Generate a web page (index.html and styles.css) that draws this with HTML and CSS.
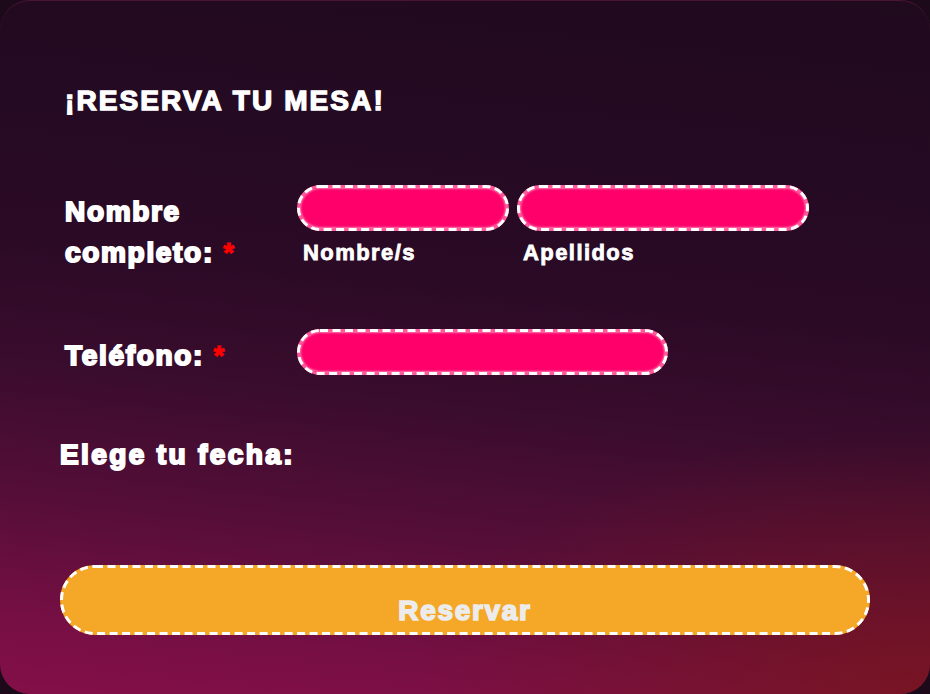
FILE: index.html
```html
<!DOCTYPE html>
<html lang="es">
<head>
<meta charset="utf-8">
<title>Reserva tu mesa</title>
<link rel="stylesheet" href="styles.css">
</head>
<body>
<form class="card">
  <h1 class="title">¡RESERVA TU MESA!</h1>

  <div class="row row-name">
    <label class="label">Nombre completo:<span class="req"> *</span></label>
    <div class="fields">
      <div class="field">
        <div class="pill pill-first">
          <input class="input" type="text">
          <svg class="dash" width="212" height="46" viewBox="0 0 212 46"><rect x="1.5" y="1.5" width="209" height="43" rx="21.5" ry="21.5"/></svg>
        </div>
        <span class="sub">Nombre/s</span>
      </div>
      <div class="field">
        <div class="pill pill-last">
          <input class="input" type="text">
          <svg class="dash" width="292" height="46" viewBox="0 0 292 46"><rect x="1.5" y="1.5" width="289" height="43" rx="21.5" ry="21.5"/></svg>
        </div>
        <span class="sub">Apellidos</span>
      </div>
    </div>
  </div>

  <div class="row row-phone">
    <label class="label">Teléfono:<span class="req"> *</span></label>
    <div class="fields">
      <div class="pill pill-phone">
        <input class="input" type="tel">
        <svg class="dash" width="371" height="46" viewBox="0 0 371 46"><rect x="1.5" y="1.5" width="368" height="43" rx="21.5" ry="21.5"/></svg>
      </div>
    </div>
  </div>

  <p class="date-label">Elege tu fecha:</p>

  <div class="pill pill-submit">
    <button class="submit" type="button">Reservar</button>
    <svg class="dash" width="810" height="70" viewBox="0 0 810 70"><rect x="1.5" y="1.5" width="807" height="67" rx="33.5" ry="33.5"/></svg>
  </div>
</form>
</body>
</html>
```

FILE: styles.css
```css
html, body {
  margin: 0;
  padding: 0;
  background: #1c0a1b;
}

body {
  font-family: "Liberation Sans", Arial, sans-serif;
  color: #ffffff;
}

.card {
  box-sizing: border-box;
  width: 930px;
  height: 694px;
  padding: 85px 60px 0 60px;
  border-radius: 30px;
  border-top: 1px solid #4a1434;
  background:
    radial-gradient(ellipse 65% 45% at 100% 100%, rgba(122, 22, 24, 0.75), rgba(122, 22, 24, 0) 85%),
    linear-gradient(6deg, #840f48 0%, #760f44 10%, #560e38 25%, #3a0c2d 42%, #2b0a26 58%, #240a22 78%, #200a1e 100%);
  display: flex;
  flex-direction: column;
  align-items: flex-start;
}

.title {
  margin: -1px 0 0 5px;
  font-size: 28px;
  line-height: 32px;
  font-weight: 700;
  letter-spacing: 0.075em;
  -webkit-text-stroke: 1.4px #ffffff;
}

.row {
  display: flex;
  align-items: flex-start;
  padding-left: 5px;
}

.row-name {
  margin-top: 68px;
}

.row-phone {
  margin-top: 56px;
}

.label {
  width: 232px;
  margin-top: 6px;
  font-size: 28px;
  line-height: 41px;
  font-weight: 700;
  letter-spacing: 0.06em;
  -webkit-text-stroke: 2px #ffffff;
}

.req {
  color: #ff0000;
  -webkit-text-stroke: 1px #ff0000;
}

.fields {
  display: flex;
  gap: 8px;
}

.field {
  display: flex;
  flex-direction: column;
  align-items: flex-start;
}

.pill {
  position: relative;
  display: flex;
}

.pill-first { width: 212px; height: 46px; }
.pill-last { width: 292px; height: 46px; }
.pill-phone { width: 371px; height: 46px; }
.pill-submit { width: 810px; height: 70px; margin-top: 94px; }

.input {
  box-sizing: border-box;
  width: 100%;
  height: 100%;
  margin: 0;
  padding: 0 16px;
  border: 3px solid #ff5a9c;
  border-radius: 23px;
  background: #ff006a;
  box-shadow: inset 0 0 2px 1px rgba(255, 150, 190, 0.8);
  outline: none;
  font: inherit;
  color: #ffffff;
}

.dash {
  position: absolute;
  left: 0;
  top: 0;
  pointer-events: none;
}

.dash rect {
  fill: none;
  stroke: #ffffff;
  stroke-width: 3;
  stroke-dasharray: 8 4.5;
}

.sub {
  margin: 9px 0 0 6px;
  font-size: 22px;
  line-height: 26px;
  font-weight: 700;
  letter-spacing: 0.065em;
  -webkit-text-stroke: 0.8px #ffffff;
}

.date-label {
  margin: 63px 0 0 0;
  font-size: 28px;
  line-height: 32px;
  font-weight: 700;
  letter-spacing: 0.085em;
  -webkit-text-stroke: 2px #ffffff;
}

.submit {
  box-sizing: border-box;
  display: block;
  width: 100%;
  height: 100%;
  margin: 0;
  padding: 21px 0 0 0;
  border: 3px solid #f5a727;
  border-radius: 35px;
  background: #f5a727;
  font-family: "Liberation Sans", Arial, sans-serif;
  font-size: 28px;
  line-height: 32px;
  font-weight: 700;
  letter-spacing: 0.06em;
  color: #ececec;
  -webkit-text-stroke: 1.6px #ececec;
  text-align: center;
}
```
